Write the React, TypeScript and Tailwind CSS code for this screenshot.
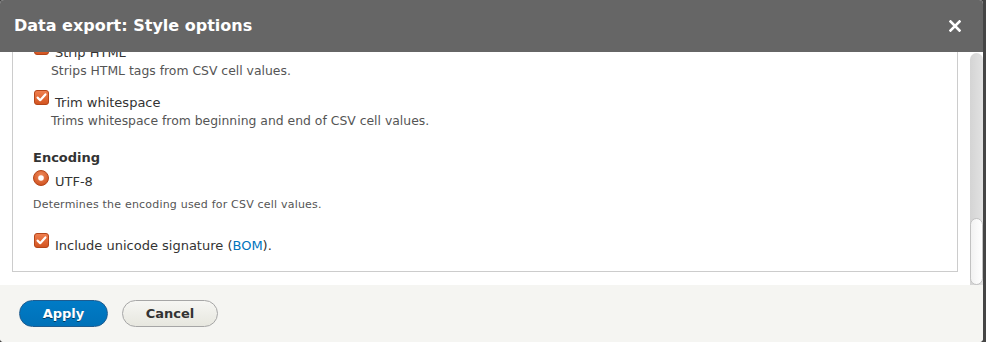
import React from 'react';

// Native-looking orange checkbox (checked)
const Checkbox = () => (
  <svg width="15" height="15" viewBox="0 0 15 15" className="block">
    <defs>
      <linearGradient id="cbg" x1="0" y1="0" x2="0" y2="1">
        <stop offset="0" stopColor="#f08050" />
        <stop offset="1" stopColor="#d2531f" />
      </linearGradient>
    </defs>
    <rect x="0.5" y="0.5" width="14" height="14" rx="2.5" fill="url(#cbg)" stroke="#b4461a" />
    <path d="M3.6 7.6 L6.2 10.2 L11.4 4.4" fill="none" stroke="#fff" strokeWidth="2.2" strokeLinecap="round" strokeLinejoin="round" />
  </svg>
);

const Radio = () => (
  <svg width="16" height="16" viewBox="0 0 16 16" className="block">
    <defs>
      <radialGradient id="rbg" cx="0.5" cy="0.35" r="0.65">
        <stop offset="0" stopColor="#f08a5c" />
        <stop offset="1" stopColor="#d0521f" />
      </radialGradient>
    </defs>
    <circle cx="8" cy="8" r="7.5" fill="url(#rbg)" stroke="#b4461a" />
    <circle cx="8" cy="8" r="2.8" fill="#fff" />
  </svg>
);

const CheckRow = ({ children, className = '' }: { children: React.ReactNode; className?: string }) => (
  <div className={`flex items-start h-[21px] ${className}`}>
    <div className="w-[22px] shrink-0 pl-[1px]">
      <Checkbox />
    </div>
    <span className="pt-[3.5px] text-[13px] leading-[18px] text-[#333]">{children}</span>
  </div>
);

export default function App() {
  return (
    <div className="w-[986px] h-[342px] bg-[#454545] overflow-hidden" style={{ fontFamily: '"DejaVu Sans", "Liberation Sans", sans-serif' }}>
      <div className="w-[983px] h-[342px] flex flex-col rounded-[4px] overflow-hidden bg-white">
        {/* Title bar */}
        <div className="h-[52px] shrink-0 bg-[#666] flex items-center justify-between pl-[14px] pr-[22px]">
          <h1 className="text-white font-bold text-[16px] leading-[20px]">Data export: Style options</h1>
          <svg width="12" height="12" viewBox="0 0 12 12">
            <path d="M1.5 1.5 L10.5 10.5 M10.5 1.5 L1.5 10.5" stroke="#fff" strokeWidth="2.6" strokeLinecap="square" />
          </svg>
        </div>

        {/* Scrolled content */}
        <div className="h-[233px] shrink-0 flex">
          <div className="flex-1 flex flex-col justify-end overflow-hidden">
            <div className="ml-[12px] mr-[12px] mb-[13px] border border-[#ccc] pl-[20px] pr-[20px] pt-[20px] pb-[17px]">
              <CheckRow>Strip HTML</CheckRow>
              <p className="mt-[2px] pl-[18px] text-[12.4px] leading-[16px] text-[#555]">Strips HTML tags from CSV cell values.</p>
              <CheckRow className="mt-[11px]">Trim whitespace</CheckRow>
              <p className="mt-[2px] pl-[18px] text-[12.4px] leading-[16px] text-[#555]">Trims whitespace from beginning and end of CSV cell values.</p>
              <div className="mt-[20px] text-[13px] leading-[18px] font-bold text-[#333]">Encoding</div>
              <div className="mt-[3px] flex items-start h-[22px]">
                <div className="w-[22px] shrink-0">
                  <Radio />
                </div>
                <span className="pt-[3px] text-[13px] leading-[18px] text-[#333]">UTF-8</span>
              </div>
              <p className="mt-[5px] text-[11px] leading-[15px] text-[#555] tracking-[0.2px]">Determines the encoding used for CSV cell values.</p>
              <CheckRow className="mt-[21px]">
                Include unicode signature (<a className="text-[#0074bd]">BOM</a>).
              </CheckRow>
            </div>
          </div>
          {/* Scrollbar */}
          <div className="w-[13px] shrink-0 flex flex-col pt-[1px]">
            <div className="flex-1 rounded-t-[7px] bg-gradient-to-r from-[#d4d4d4] to-[#e2e2e2]">
              <div className="h-full flex flex-col justify-end">
                <div className="h-[67px] rounded-[7px] border border-[#c2c2c2] bg-gradient-to-r from-[#f2f2f2] to-[#ffffff]" />
              </div>
            </div>
          </div>
        </div>

        {/* Footer */}
        <div className="flex-1 bg-[#f5f5f2] flex items-center gap-[14px] pl-[19px]">
          <button className="h-[27px] w-[89px] rounded-full border border-[#1e5c90] bg-gradient-to-b from-[#007bc6] to-[#0071b8] text-white font-bold text-[13px] leading-[18px] [text-shadow:0_1px_0_rgba(0,0,0,0.5)]">
            Apply
          </button>
          <button className="h-[27px] w-[96px] rounded-full border border-[#a6a6a6] bg-gradient-to-b from-[#f6f6f3] to-[#e7e7df] text-[#333] font-bold text-[13px] leading-[18px]">
            Cancel
          </button>
        </div>
      </div>
    </div>
  );
}
